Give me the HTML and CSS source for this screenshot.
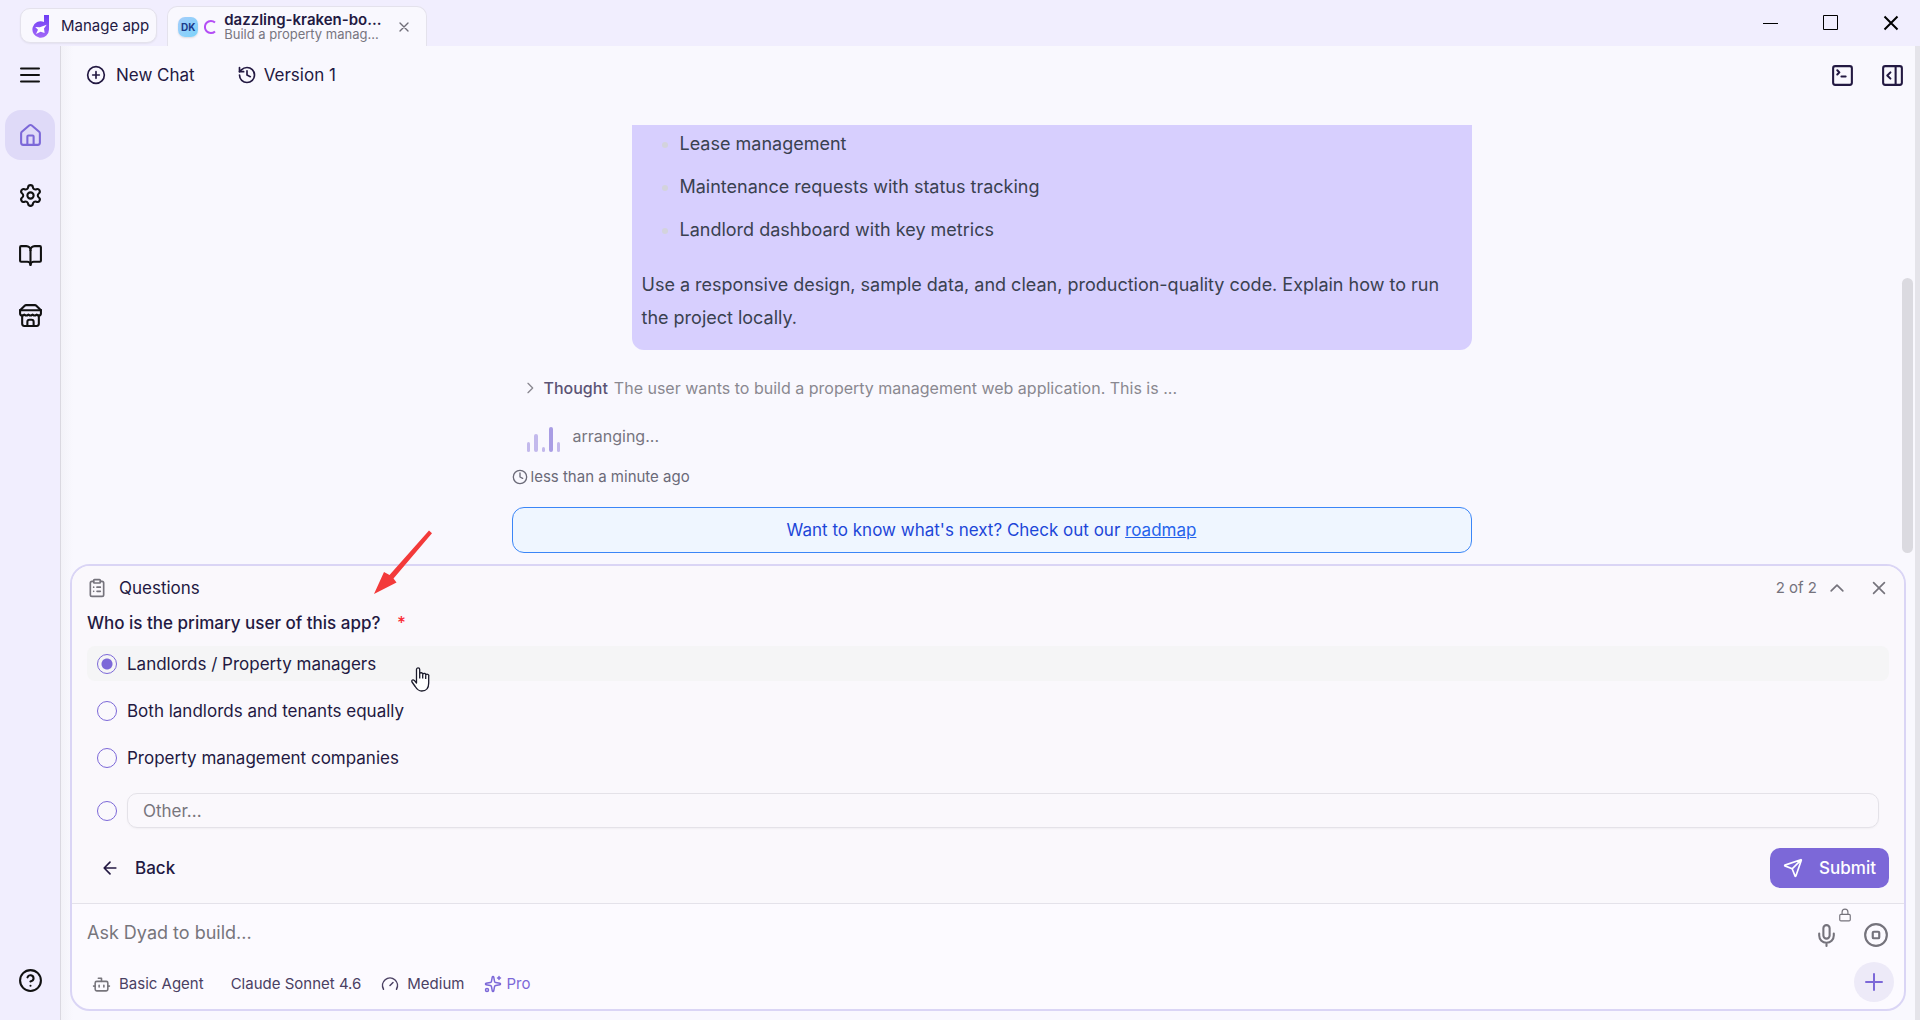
FILE: index.html
```html
<!DOCTYPE html>
<html lang="en">
<head>
    <meta charset="UTF-8">
    <meta name="viewport" content="width=device-width, initial-scale=1.0">
    <title>Dyad</title>
    <link rel="stylesheet" href="styles.css">
</head>
<body>
    <div class="app">
        <header class="titlebar">
            <button class="manage-btn">
                <svg class="logo" width="18" height="24" viewBox="0 0 18 24">
                    <defs>
                        <linearGradient id="logoFill" x1="0" y1="0" x2="0" y2="1">
                            <stop offset="0" stop-color="#6d3cf5"/>
                            <stop offset="1" stop-color="#a368f7"/>
                        </linearGradient>
                    </defs>
                    <path fill="url(#logoFill)" d="M12 1h5v14.500a8.300 8.300 0 1 1-5-7.600z"/>
                    <path fill="#fff" d="M14.700 10.800 12 14.600 12.600 19 8.600 17.700 4 20 6 15.800 3.200 13 7.800 13.200z"/>
                </svg>
                Manage app
            </button>
            <div class="tab">
                <span class="tab-badge">DK</span>
                <svg class="spinner" width="14" height="14" viewBox="0 0 14 14"><path d="M11 2.600a6 6 0 1 0 0 8.800"/></svg>
                <div class="tab-text">
                    <div class="tab-title">dazzling-kraken-bo...</div>
                    <div class="tab-sub">Build a property manag...</div>
                </div>
                <button class="icon-btn tab-close" aria-label="Close tab">
                    <svg class="icon" width="16" height="16" viewBox="0 0 24 24"><path d="M18 6 6 18M6 6l12 12"/></svg>
                </button>
            </div>
            <div class="window-controls">
                <button class="icon-btn" aria-label="Minimize"><svg width="16" height="16" viewBox="0 0 16 16"><path d="M0 8.500h15" stroke="#000"/></svg></button>
                <button class="icon-btn" aria-label="Maximize"><svg width="16" height="16" viewBox="0 0 16 16"><path d="M.5.5h14v14H.5z" stroke="#000" fill="none"/></svg></button>
                <button class="icon-btn" aria-label="Close"><svg width="16" height="16" viewBox="0 0 16 16"><path d="m1.500 1.500 13 13m0-13-13 13" stroke="#000" stroke-width="2"/></svg></button>
            </div>
        </header>

        <div class="body">
            <nav class="sidebar">
                <button class="nav-btn" aria-label="Menu"><svg class="icon" width="24" height="24" viewBox="0 0 24 24"><path d="M3 5.500h18M3 12h18M3 18.500h18"/></svg></button>
                <a class="nav-btn active" href="#" aria-label="Home"><svg class="icon" width="25" height="25" viewBox="0 0 24 24"><path d="M15 21v-8a1 1 0 0 0-1-1h-4a1 1 0 0 0-1 1v8"/><path d="M3 10a2 2 0 0 1 .709-1.528l7-6a2 2 0 0 1 2.582 0l7 6A2 2 0 0 1 21 10v9a2 2 0 0 1-2 2H5a2 2 0 0 1-2-2z"/></svg></a>
                <a class="nav-btn" href="#" aria-label="Settings"><svg class="icon" width="25" height="25" viewBox="0 0 24 24"><path d="M9.671 4.136a2.340 2.340 0 0 1 4.659 0 2.340 2.340 0 0 0 3.319 1.915 2.340 2.340 0 0 1 2.330 4.033 2.340 2.340 0 0 0 0 3.831 2.340 2.340 0 0 1-2.330 4.033 2.340 2.340 0 0 0-3.319 1.915 2.340 2.340 0 0 1-4.659 0 2.340 2.340 0 0 0-3.320-1.915 2.340 2.340 0 0 1-2.330-4.033 2.340 2.340 0 0 0 0-3.831A2.340 2.340 0 0 1 6.350 6.051a2.340 2.340 0 0 0 3.319-1.915"/><circle cx="12" cy="12" r="3"/></svg></a>
                <a class="nav-btn" href="#" aria-label="Library"><svg class="icon" width="25" height="25" viewBox="0 0 24 24"><path d="M12 7v14"/><path d="M3 18a1 1 0 0 1-1-1V4a1 1 0 0 1 1-1h5a4 4 0 0 1 4 4 4 4 0 0 1 4-4h5a1 1 0 0 1 1 1v13a1 1 0 0 1-1 1h-6a3 3 0 0 0-3 3 3 3 0 0 0-3-3z"/></svg></a>
                <a class="nav-btn" href="#" aria-label="Hub"><svg class="icon" width="25" height="25" viewBox="0 0 24 24"><path d="m2 7 4.410-4.410A2 2 0 0 1 7.830 2h8.340a2 2 0 0 1 1.420.590L22 7"/><path d="M4 12v8a2 2 0 0 0 2 2h12a2 2 0 0 0 2-2v-8"/><path d="M15 22v-4a2 2 0 0 0-2-2h-2a2 2 0 0 0-2 2v4"/><path d="M2 7h20"/><path d="M22 7v3a2 2 0 0 1-2 2 2.700 2.700 0 0 1-1.590-.63.7.7 0 0 0-.82 0A2.700 2.700 0 0 1 16 12a2.700 2.700 0 0 1-1.590-.63.7.7 0 0 0-.82 0A2.700 2.700 0 0 1 12 12a2.700 2.700 0 0 1-1.590-.63.7.7 0 0 0-.82 0A2.700 2.700 0 0 1 8 12a2.700 2.700 0 0 1-1.590-.63.7.7 0 0 0-.82 0A2.700 2.700 0 0 1 4 12a2 2 0 0 1-2-2V7"/></svg></a>
                <button class="nav-btn help" aria-label="Help"><svg class="icon" width="25" height="25" viewBox="0 0 24 24"><circle cx="12" cy="12" r="10"/><path d="M9.090 9a3 3 0 0 1 5.830 1c0 2-3 3-3 3M12 17h.01"/></svg></button>
            </nav>

            <main class="main">
                <div class="toolbar">
                    <button class="tool-btn new-chat"><svg class="icon" width="20" height="20" viewBox="0 0 24 24"><circle cx="12" cy="12" r="10"/><path d="M8 12h8M12 8v8"/></svg>New Chat</button>
                    <button class="tool-btn"><svg class="icon" width="20" height="20" viewBox="0 0 24 24"><path d="M3 12a9 9 0 1 0 9-9 9.750 9.750 0 0 0-6.740 2.740L3 8"/><path d="M3 3v5h5M12 7v5l4 2"/></svg>Version 1</button>
                    <div class="toolbar-right">
                        <button class="icon-btn" aria-label="Terminal"><svg class="icon" width="25" height="25" viewBox="0 0 24 24"><path d="m7 11 2-2-2-2M11 13h4"/><rect x="3" y="3" width="18" height="18" rx="2"/></svg></button>
                        <button class="icon-btn" aria-label="Toggle panel"><svg class="icon" width="25" height="25" viewBox="0 0 24 24"><rect x="3" y="3" width="18" height="18" rx="2"/><path d="M15 3v18M10 15l-3-3 3-3"/></svg></button>
                    </div>
                </div>

                <section class="chat">
                    <div class="messages">
                        <div class="bubble">
                            <ul>
                                <li>Lease management</li>
                                <li>Maintenance requests with status tracking</li>
                                <li>Landlord dashboard with key metrics</li>
                            </ul>
                            <p>Use a responsive design, sample data, and clean, production-quality code. Explain how to run the project locally.</p>
                        </div>
                        <div class="thought">
                            <svg class="icon" width="16" height="16" viewBox="0 0 24 24"><path d="m9 19 7-7-7-7"/></svg>
                            <span class="thought-label">Thought</span>
                            <span class="thought-text">The user wants to build a property management web application. This is ...</span>
                        </div>
                        <div class="working">
                            <svg class="bars" width="34" height="26" viewBox="0 0 34 26" fill="#c3b9ec">
                                <rect x="0" y="15" width="3" height="10" rx="1.500"/>
                                <rect x="7" y="7" width="4" height="18" rx="2"/>
                                <rect x="15" y="20" width="3" height="5" rx="1.500"/>
                                <rect x="22" y="0" width="4" height="25" rx="2" fill="#a99de4"/>
                                <rect x="30" y="15" width="3" height="10" rx="1.500"/>
                            </svg>
                            <span>arranging...</span>
                        </div>
                        <div class="time">
                            <svg class="icon" width="16" height="16" viewBox="0 0 24 24"><circle cx="12" cy="12" r="10"/><path d="M12 6v6l4 2"/></svg>
                            less than a minute ago
                        </div>
                        <div class="notice">Want to know what's next? Check out our&nbsp;<a href="#">roadmap</a></div>
                    </div>
                    <div class="scroll-thumb"></div>
                </section>

                <section class="composer">
                    <form class="questions">
                        <div class="q-header">
                            <svg class="icon" width="20" height="20" viewBox="0 0 24 24"><rect x="8" y="2" width="8" height="4" rx="1"/><path d="M16 4h2a2 2 0 0 1 2 2v14a2 2 0 0 1-2 2H6a2 2 0 0 1-2-2V6a2 2 0 0 1 2-2h2M12 11h4M12 16h4M8 11h.01M8 16h.01"/></svg>
                            <span class="q-title">Questions</span>
                            <span class="q-count">2 of 2</span>
                            <button type="button" class="icon-btn" aria-label="Collapse"><svg class="icon" width="20" height="20" viewBox="0 0 24 24"><path d="m5 15.500 7-7 7 7"/></svg></button>
                            <button type="button" class="icon-btn q-close" aria-label="Dismiss"><svg class="icon" width="20" height="20" viewBox="0 0 24 24"><path d="M18.500 5.500l-13 13M5.500 5.500l13 13"/></svg></button>
                        </div>
                        <div class="q-text">Who is the primary user of this app? <span class="required">*</span></div>
                        <div class="options">
                            <label class="option hovered"><input type="radio" name="user" checked>Landlords / Property managers</label>
                            <label class="option"><input type="radio" name="user">Both landlords and tenants equally</label>
                            <label class="option"><input type="radio" name="user">Property management companies</label>
                            <div class="option other">
                                <input type="radio" name="user" aria-label="Other">
                                <input type="text" class="other-input" placeholder="Other..." aria-label="Other answer">
                            </div>
                        </div>
                        <div class="q-actions">
                            <button type="button" class="back-btn"><svg class="icon" width="20" height="20" viewBox="0 0 24 24"><path d="m12 19-7-7 7-7M19 12H5"/></svg>Back</button>
                            <button type="button" class="submit-btn"><svg class="icon" width="20" height="20" viewBox="0 0 24 24"><path d="M14.536 21.686a.5.5 0 0 0 .937-.024l6.500-19a.496.496 0 0 0-.635-.635l-19 6.500a.5.5 0 0 0-.024.937l7.930 3.180a2 2 0 0 1 1.112 1.110zM21.854 2.147l-10.940 10.939"/></svg>Submit</button>
                        </div>
                    </form>
                    <div class="prompt">
                        <div class="prompt-row">
                            <input type="text" class="prompt-input" placeholder="Ask Dyad to build..." aria-label="Message">
                            <button class="icon-btn mic" aria-label="Voice input">
                                <svg class="icon" width="25" height="25" viewBox="0 0 24 24"><path d="M12 19v3M19 10v2a7 7 0 0 1-14 0v-2"/><rect x="9" y="2" width="6" height="13" rx="3"/></svg>
                                <svg class="icon lock" width="14" height="14" viewBox="0 0 24 24"><rect x="3" y="11" width="18" height="11" rx="2"/><path d="M7 11V7a5 5 0 0 1 10 0v4"/></svg>
                            </button>
                            <button class="icon-btn" aria-label="Stop"><svg class="icon" width="26" height="26" viewBox="0 0 24 24"><circle cx="12" cy="12" r="10"/><rect x="9" y="9" width="6" height="6" rx="1"/></svg></button>
                        </div>
                        <div class="mode-row">
                            <button class="mode"><svg class="icon muted" width="19" height="19" viewBox="0 0 24 24"><path d="M12 8V4H8"/><rect x="4" y="8" width="16" height="12" rx="2"/><path d="M2 14h2M20 14h2M15 13v2M9 13v2"/></svg>Basic Agent</button>
                            <button class="mode">Claude Sonnet 4.6</button>
                            <button class="mode"><svg class="icon" width="18" height="18" viewBox="0 0 24 24"><path d="m12 14 4-4M3.340 19a10 10 0 1 1 17.320 0"/></svg>Medium</button>
                            <button class="mode pro"><svg class="icon" width="18" height="18" viewBox="0 0 24 24"><path d="M11.017 2.814a1 1 0 0 1 1.966 0l1.051 5.558a2 2 0 0 0 1.594 1.594l5.558 1.051a1 1 0 0 1 0 1.966l-5.558 1.051a2 2 0 0 0-1.594 1.594l-1.051 5.558a1 1 0 0 1-1.966 0l-1.051-5.558a2 2 0 0 0-1.594-1.594l-5.558-1.051a1 1 0 0 1 0-1.966l5.558-1.051a2 2 0 0 0 1.594-1.594zM20 2v4M22 4h-4"/><circle cx="4" cy="20" r="2"/></svg>Pro</button>
                            <button class="add-btn" aria-label="Add"><svg class="icon" width="24" height="24" viewBox="0 0 24 24"><path d="M4 12h16M12 4v16"/></svg></button>
                        </div>
                    </div>

                    <!-- pointer and arrow lie over the card -->
                    <svg class="arrow" width="60" height="66" viewBox="0 0 60 66"><path fill="#f33a3a" d="M56 1.500 59 4.200 20.500 49.500 23.500 53.500 1 65 11 43 16.500 46z"/></svg>
                    <svg class="pointer" width="19" height="25" viewBox="0 0 19 25"><path fill="#fff" stroke="#1b1b2b" stroke-width="1.300" stroke-linejoin="round" d="M5.500 13.500V2.500a1.600 1.600 0 0 1 3.200 0V7a1.500 1.500 0 0 1 3 .500 1.500 1.500 0 0 1 3 .800 1.500 1.500 0 0 1 3 1V16c0 5-2.500 8-7 8-3.500 0-5-2-6.500-4.500L1 15c-.8-1.800 1-2.800 2.300-1.600L5.500 16zM8.700 7v4.500M11.700 7.500v4M14.700 8.500v3.500"/></svg>
                </section>
            </main>
        </div>
    </div>
</body>
</html>
```
FILE: styles.css
```css
* {
    box-sizing: border-box;
}

body {
    margin: 0;
    font-family: Inter, "Liberation Sans", sans-serif;
    font-size: 17px;
    line-height: 24px;
    color: #231942;
    background: #f1eefe;
}

button, input {
    font: inherit;
    color: inherit;
}

button {
    display: flex;
    align-items: center;
    padding: 0;
    border: none;
    background: none;
    cursor: pointer;
}

ul, p {
    margin: 0;
}

.icon {
    flex: none;
    fill: none;
    stroke: currentColor;
    stroke-width: 2;
    stroke-linecap: round;
    stroke-linejoin: round;
}

.app {
    display: flex;
    flex-direction: column;
    height: 100vh;
    overflow: hidden;
}

/* Title bar */
.titlebar {
    display: flex;
    align-items: flex-end;
    height: 46px;
    padding-left: 20px;
}

.manage-btn {
    height: 35px;
    margin: 0 10px 3px 0;
    padding: 0 7px 0 11px;
    gap: 11px;
    border: 1px solid #e4e2ec;
    border-radius: 10px;
    background: #f9f8fe;
    box-shadow: 0 1px 2px rgba(0,0,0,0.06);
    font-size: 15px;
}

.tab {
    display: flex;
    align-items: center;
    width: 260px;
    height: 40px;
    padding: 0 14px 0 10px;
    border: 1px solid #e4e2ec;
    border-bottom: none;
    border-radius: 10px 10px 0 0;
    background: #f9f8fe;
}

.tab-badge {
    width: 20px;
    height: 20px;
    margin-right: 6px;
    border-radius: 7px;
    background: linear-gradient(135deg, #a5cdfb, #7cd3fa);
    box-shadow: 0 1px 2px rgba(0,0,0,0.12);
    color: #1c3a8a;
    font-size: 10px;
    font-weight: 700;
    line-height: 20px;
    text-align: center;
}

.spinner {
    fill: none;
    stroke: #b44df5;
    stroke-width: 2;
}

.tab-text {
    flex: 1;
    margin-left: 6px;
    font-size: 13px;
    line-height: 15px;
    white-space: nowrap;
}

.tab-title {
    font-size: 15px;
    font-weight: 600;
}

.tab-sub {
    color: #77757f;
}

.tab-close {
    color: #6f6d78;
}

.window-controls {
    display: flex;
    align-self: center;
    gap: 44px;
    margin-left: auto;
    padding-right: 21px;
}

/* Sidebar */
.body {
    flex: 1;
    display: flex;
    min-height: 0;
    padding-right: 5px;
    background: linear-gradient(#e5e4ea, #e5e4ea) right / 5px 100% no-repeat;
}

.sidebar {
    display: flex;
    flex-direction: column;
    align-items: center;
    gap: 10px;
    width: 61px;
    padding: 4px 0 15px;
    border-right: 1px solid #dad8e0;
    background: #f1eefe;
}

.nav-btn {
    display: flex;
    align-items: center;
    justify-content: center;
    width: 50px;
    height: 50px;
    border-radius: 16px;
    color: #111;
}

.nav-btn.active {
    background: #dfdaf8;
    color: #7c68d8;
}

.help {
    margin-top: auto;
}

/* Main */
.main {
    flex: 1;
    display: flex;
    flex-direction: column;
    min-width: 0;
    padding: 0 9px 9px;
    background: linear-gradient(90deg, #f3f2f8, #f9f8fe 12px);
}

.toolbar {
    display: flex;
    align-items: center;
    height: 58px;
    padding: 0 1px 0 16px;
}

.tool-btn {
    gap: 7px;
}

.new-chat {
    gap: 10px;
    margin-right: 42px;
}

.toolbar-right {
    display: flex;
    gap: 25px;
    margin-left: auto;
}

.chat {
    position: relative;
    flex: 1;
    min-height: 0;
    margin: 21px -9px 0 0;
    padding: 0 9px 0 7px;
    overflow: hidden;
}

.messages {
    display: flex;
    flex-direction: column;
    max-width: 960px;
    margin: 0 auto;
}

.bubble {
    align-self: flex-end;
    width: 840px;
    max-width: 100%;
    padding: 2px 10px 16px;
    border-radius: 0 0 12px 12px;
    background: #d7cffe;
    color: #3a4150;
    font-size: 18px;
    line-height: 33px;
}

.bubble ul {
    padding-left: 38px;
}

.bubble li {
    margin-bottom: 10px;
}

.bubble li::marker {
    color: #d3d3dc;
}

.bubble p {
    margin-top: 22px;
}

.thought {
    display: flex;
    align-items: center;
    gap: 6px;
    margin: 26px 0 0 10px;
    color: #8a8890;
    font-size: 16px;
}

.thought-label {
    color: #5c5475;
    font-weight: 500;
}

.working {
    display: flex;
    align-items: flex-start;
    gap: 12px;
    margin: 24px 0 0 15px;
    color: #77757f;
    font-size: 16px;
}

.bars {
    margin-top: 3px;
}

.time {
    display: flex;
    align-items: center;
    gap: 3px;
    margin-top: 12px;
    color: #6b6a78;
    font-size: 15px;
}

.notice {
    display: flex;
    justify-content: center;
    margin-top: 18px;
    padding: 10px;
    border: 1px solid #3b86f7;
    border-radius: 12px;
    background: #eff6ff;
    color: #1d46d8;
}

.notice a {
    color: #2563eb;
}

.scroll-thumb {
    position: absolute;
    top: 153px;
    right: 2px;
    width: 11px;
    height: 275px;
    border-radius: 6px;
    background: #dbdae0;
}

/* Composer card */
.composer {
    position: relative;
    border: 2px solid #dad5f5;
    border-radius: 20px;
    background: #fcfaff;
}

.questions {
    padding: 8px 15px 15px;
    border-bottom: 1px solid #e4e2ea;
    border-radius: 18px 18px 0 0;
    background: #faf8fc;
}

.q-header {
    display: flex;
    align-items: center;
    height: 28px;
    color: #75737c;
}

.q-title {
    margin-left: 12px;
    color: #231942;
}

.q-count {
    margin: 0 10px 0 auto;
    font-size: 15px;
}

.q-close {
    margin-left: 22px;
}

.q-text {
    margin: 9px 0 11px;
    font-weight: 500;
}

.required {
    margin-left: 12px;
    color: #fb2c36;
}

.options {
    display: flex;
    flex-direction: column;
    gap: 12px;
}

.option {
    display: flex;
    align-items: center;
    gap: 10px;
    min-height: 35px;
    padding: 0 10px;
    border-radius: 8px;
}

.option.hovered {
    background: #f5f5f6;
}

.option input[type="radio"] {
    appearance: none;
    flex: none;
    width: 20px;
    height: 20px;
    margin: 0;
    border: 1px solid #7c68d8;
    border-radius: 50%;
}

.option input[type="radio"]:checked {
    background: radial-gradient(circle, #7c68d8 5px, transparent 6px);
}

.option.other {
    padding: 6px 10px;
}

.other-input {
    flex: 1;
    min-width: 0;
    height: 35px;
    padding: 0 15px;
    border: 1px solid #e4e2e8;
    border-radius: 10px;
    background: transparent;
    box-shadow: 0 1px 2px rgba(0,0,0,0.04);
}

.other-input::placeholder,
.prompt-input::placeholder {
    color: #77757c;
    opacity: 1;
}

.q-actions {
    display: flex;
    justify-content: space-between;
    margin-top: 14px;
    font-weight: 500;
}

.back-btn {
    gap: 15px;
    padding: 0 13px;
}

.submit-btn {
    gap: 16px;
    height: 40px;
    padding: 0 13px;
    border-radius: 10px;
    background: #7c68d8;
    color: #fff;
}

.prompt {
    padding: 10px 15px 4px;
}

.prompt-row {
    display: flex;
    align-items: center;
    height: 42px;
    color: #75737c;
}

.prompt-input {
    flex: 1;
    min-width: 0;
    padding: 0 0 4px;
    border: none;
    outline: none;
    background: none;
    font-size: 18px;
}

.mic {
    position: relative;
    margin-right: 24px;
}

.lock {
    position: absolute;
    top: -15px;
    right: -13px;
}

.mode-row {
    display: flex;
    align-items: center;
    height: 46px;
    margin-top: 3px;
    padding-left: 5px;
    color: #4a4063;
    font-size: 15px;
}

.mode {
    gap: 8px;
    margin-right: 20px;
    padding-top: 4px;
}

.mode:first-child {
    margin-right: 27px;
}

.mode .muted {
    color: #77757c;
}

.mode.pro {
    gap: 4px;
    color: #7c68d8;
}

.add-btn {
    justify-content: center;
    width: 40px;
    height: 40px;
    margin: 0 -5px 0 auto;
    border-radius: 50%;
    background: #edeaf8;
    color: #7c68d8;
}

.arrow {
    position: absolute;
    top: -37px;
    left: 301px;
}

.pointer {
    position: absolute;
    top: 101px;
    left: 339px;
}
```
